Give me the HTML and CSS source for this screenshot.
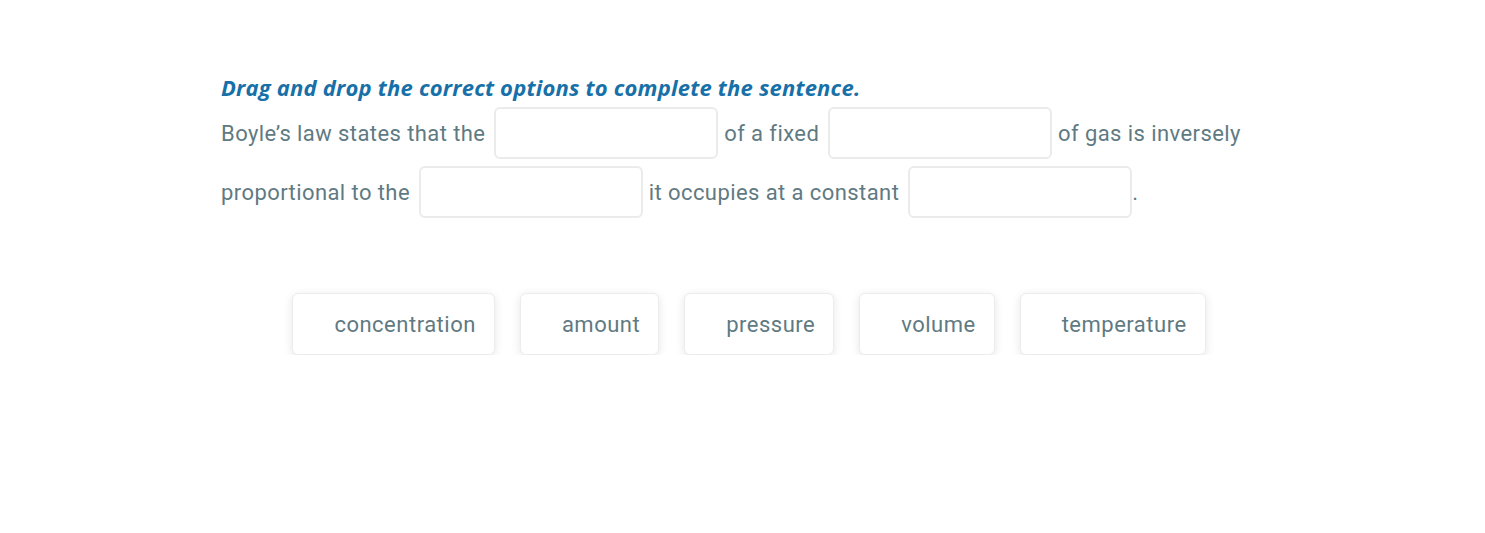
FILE: index.html
```html
<!DOCTYPE html>
<html lang="en">
<head>
<meta charset="utf-8">
<title>Drag and drop</title>
<link rel="stylesheet" href="styles.css">
</head>
<body>
<main class="content">
  <h1 class="prompt">Drag and drop the correct options to complete the sentence.</h1>
  <p class="sentence">Boyle’s law states that the <span class="blank"></span> of a fixed <span class="blank"></span> of gas is inversely proportional to the <span class="blank"></span> it occupies at a constant <span class="blank"></span>.</p>
  <div class="options">
    <div class="chip">concentration</div>
    <div class="chip">amount</div>
    <div class="chip">pressure</div>
    <div class="chip">volume</div>
    <div class="chip">temperature</div>
  </div>
</main>
</body>
</html>
```
FILE: styles.css
```css
html, body {
  margin: 0;
  padding: 0;
  background: #ffffff;
}
body {
  font-family: Roboto, "Liberation Sans", sans-serif;
  color: #5f7a82;
}
.content {
  width: 1056px;
  padding: 73px 0 0 221px;
}
.prompt {
  margin: 0;
  font-family: "Open Sans", Roboto, sans-serif;
  font-size: 22px;
  line-height: 28px;
  font-weight: 700;
  font-style: italic;
  color: #1770a8;
  letter-spacing: 0.2px;
}
.sentence {
  margin: 3px 0 0 0;
  font-size: 22px;
  line-height: 30px;
  letter-spacing: 0.42px;
  width: 1040px;
}
.blank {
  display: inline-block;
  box-sizing: border-box;
  width: 224px;
  height: 52px;
  margin: 3px 0 4px 3px;
  border: 2px solid #ebebeb;
  border-radius: 6px;
  vertical-align: -22px;
  background: #fff;
}
.options {
  display: flex;
  justify-content: center;
  gap: 25px;
  margin-top: 71px;
}
.chip {
  box-sizing: border-box;
  height: 62px;
  display: flex;
  align-items: center;
  padding: 0 18px 0 41px;
  border: 1px solid #ececec;
  border-radius: 6px;
  background: #fff;
  box-shadow: 0 2px 10px rgba(0, 0, 0, 0.1);
  font-size: 22px;
  letter-spacing: 0.5px;
}
```
